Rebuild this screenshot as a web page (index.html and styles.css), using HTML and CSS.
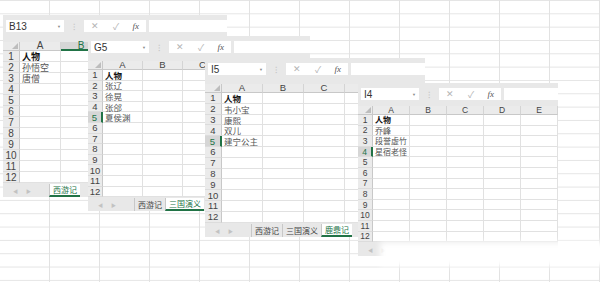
FILE: index.html
```html
<!DOCTYPE html>
<html lang="zh-CN">
<head>
  <meta charset="UTF-8">
  <title>人物表</title>
  <link rel="stylesheet" href="styles.css">
</head>
<body>
  <div class="desk">
    <div class="win w1"></div>
    <div class="win w2"></div>
    <div class="win w3"></div>
    <div class="win w4"></div>
    <div class="glow"></div>
  </div>

  <script>
    const letters = 'ABCDE';

    // one entry per open workbook window
    const books = [
      { id: 'w1', name: 'B13', selCol: 1, selRow: 0, names: ['人物', '孙悟空', '唐僧'], tabs: ['西游记'], active: 0 },
      { id: 'w2', name: 'G5', selCol: -1, selRow: 5, names: ['人物', '张辽', '徐晃', '张郃', '夏侯渊'], tabs: ['西游记', '三国演义'], active: 1 },
      { id: 'w3', name: 'I5', selCol: -1, selRow: 5, names: ['人物', '韦小宝', '康熙', '双儿', '建宁公主'], tabs: ['西游记', '三国演义', '鹿鼎记'], active: 2 },
      { id: 'w4', name: 'I4', selCol: -1, selRow: 4, names: ['人物', '乔峰', '段誉虚竹', '星宿老怪'], tabs: [], active: -1 }
    ];

    function formulaBar(b) {
      return '<div class="fbar">' +
        '<div class="namebox"><span>' + b.name + '</span><span class="drop">▼</span></div>' +
        '<div class="grip">⁝</div>' +
        '<div class="fbtns"><span>✕</span><span>✓</span><span class="fx">fx</span></div>' +
        '<div class="finput"></div>' +
        '</div>';
    }

    function sheet(b) {
      let html = '<div class="sheet"><div class="corner"></div>';
      for (let c = 0; c < letters.length; c++) {
        html += '<div class="ch' + (c === b.selCol ? ' sel' : '') + '">' + letters[c] + '</div>';
      }
      for (let r = 1; r <= 12; r++) {
        html += '<div class="rh' + (r === b.selRow ? ' sel' : '') + '">' + r + '</div>';
        for (let c = 0; c < letters.length; c++) {
          const text = c === 0 && b.names[r - 1] ? b.names[r - 1] : '';
          html += '<div class="cell' + (r === 1 && text ? ' head' : '') + '">' + text + '</div>';
        }
      }
      return html + '</div>';
    }

    function tabBar(b) {
      let html = '<div class="tabs"><div class="arrows"><span>◀</span><span>▶</span></div>';
      b.tabs.forEach(function(t, i) {
        html += '<div class="tab' + (i === b.active ? ' on' : '') + '">' + t + '</div>';
      });
      return html + '</div>';
    }

    books.forEach(function(b) {
      document.querySelector('.' + b.id).innerHTML = formulaBar(b) + sheet(b) + tabBar(b);
    });
  </script>
</body>
</html>
```

FILE: styles.css
```css
* {
  box-sizing: border-box;
}
body {
  margin: 0;
  width: 600px;
  height: 282px;
  overflow: hidden;
  background-color: #fff;
  background-image:
    linear-gradient(to right, #e2e2e2 1px, transparent 1px),
    linear-gradient(to bottom, #e4e4e4 1px, transparent 1px);
  background-size: 50px 13.333px;
  background-position: -1px 0;
}
.desk {
  position: relative;
  width: 600px;
  height: 282px;
  font-family: "Liberation Sans", Arial, sans-serif;
}

/* workbook windows */
.win {
  position: absolute;
  background: #e8e8e8;
  padding-top: 5px;
  display: flex;
  flex-direction: column;
  overflow: hidden;
}
.w1 {
  left: 3px;
  top: 15px;
  width: 224px;
  --rw: 17px;
  --cw: 41px;
  --rh: 11px;
  --gap: 10px;
  --fs: 9px;
  --hs: 10px;
}
.w2 {
  left: 88px;
  top: 36px;
  width: 222px;
  --rw: 15px;
  --cw: 40px;
  --rh: 10.6px;
  --gap: 8px;
  --fs: 8.5px;
  --hs: 9.5px;
}
.w3 {
  left: 205px;
  top: 58px;
  width: 220px;
  --rw: 17px;
  --cw: 41px;
  --rh: 10.8px;
  --gap: 9px;
  --fs: 8.5px;
  --hs: 9.5px;
}
.w4 {
  left: 358px;
  top: 83px;
  width: 200px;
  --rw: 15px;
  --cw: 37px;
  --rh: 10.6px;
  --gap: 6px;
  --fs: 8px;
  --hs: 8.5px;
}

/* formula bar */
.fbar {
  display: flex;
  align-items: center;
  height: 12px;
  padding-left: 3px;
}
.namebox {
  width: 58px;
  height: 12px;
  background: #fff;
  display: flex;
  align-items: center;
  justify-content: space-between;
  padding: 0 3px;
  font-size: 10px;
  color: #333;
}
.namebox .drop {
  font-size: 4px;
  color: #888;
}
.grip {
  width: 20px;
  text-align: center;
  font-size: 9px;
  color: #c4c4c4;
}
.fbtns {
  width: 62px;
  height: 12px;
  background: #fff;
  display: flex;
  align-items: center;
  justify-content: space-around;
  font-size: 9px;
  color: #b4b4b4;
}
.fbtns .fx {
  font-family: "Liberation Serif", serif;
  font-style: italic;
  color: #555;
}
.finput {
  flex: 1;
  height: 12px;
  margin-left: 3px;
  background: #fff;
}

/* grid */
.sheet {
  margin-top: var(--gap);
  display: grid;
  grid-template-columns: var(--rw) repeat(5, var(--cw));
  grid-template-rows: 9px repeat(12, var(--rh));
}
.corner {
  background: #ebebeb;
  border-right: 1px solid #c8c8c8;
  border-bottom: 1px solid #c8c8c8;
  display: flex;
  justify-content: flex-end;
  align-items: flex-end;
  padding: 1px;
}
.corner::after {
  content: "";
  width: 6px;
  height: 6px;
  background: #bdbdbd;
  clip-path: polygon(100% 0, 100% 100%, 0 100%);
}
.ch {
  background: #ebebeb;
  border-right: 1px solid #d4d4d4;
  border-bottom: 1px solid #c8c8c8;
  font-size: var(--hs);
  line-height: 8px;
  text-align: center;
  color: #444;
}
.ch.sel {
  background: #d6d6d6;
  color: #217346;
  border-bottom: 2px solid #217346;
}
.rh {
  background: #ebebeb;
  border-right: 1px solid #c8c8c8;
  border-bottom: 1px solid #dcdcdc;
  font-size: var(--hs);
  text-align: center;
  color: #444;
  display: flex;
  align-items: center;
  justify-content: center;
}
.rh.sel {
  background: #d6d6d6;
  color: #217346;
  border-right: 2px solid #217346;
}
.cell {
  background: #fff;
  border-right: 1px solid #e1e1e1;
  border-bottom: 1px solid #e1e1e1;
  font-family: "Noto Sans CJK SC", sans-serif;
  font-size: var(--fs);
  color: #555;
  padding-left: 2px;
  white-space: nowrap;
  display: flex;
  align-items: center;
}
.cell.head {
  font-weight: 700;
  color: #111;
}

/* sheet tabs */
.tabs {
  display: flex;
  height: 13px;
  margin-top: 1px;
}
.arrows {
  width: 46px;
  flex-shrink: 0;
  display: flex;
  align-items: center;
  gap: 8px;
  padding-left: 10px;
  font-size: 5px;
  color: #c2c2c2;
}
.tab {
  display: flex;
  align-items: center;
  padding: 0 3px;
  border-left: 1px solid #c8c8c8;
  font-family: "Noto Sans CJK SC", sans-serif;
  font-size: 8px;
  color: #444;
  white-space: nowrap;
}
.tab.on {
  background: #fff;
  color: #217346;
  border-bottom: 2px solid #217346;
}

/* soft white smear over the bottom edge */
.glow {
  position: absolute;
  left: 380px;
  top: 242px;
  width: 240px;
  height: 24px;
  background: #fff;
  filter: blur(3px);
}
```
